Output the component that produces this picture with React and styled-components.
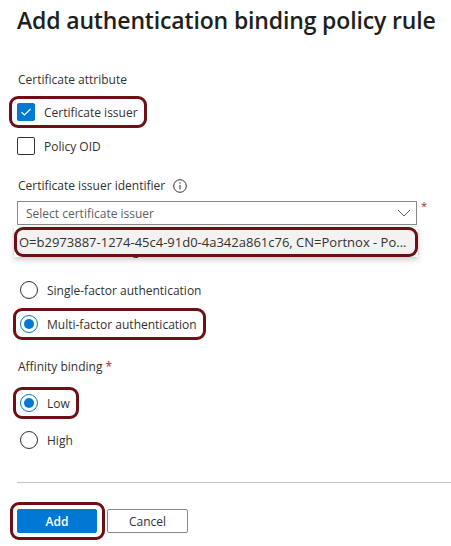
import React from 'react';
import styled, { createGlobalStyle } from 'styled-components';

const GlobalStyle = createGlobalStyle`
  html, body {
    margin: 0;
    padding: 0;
    background: #ffffff;
  }
  body {
    font-family: "Open Sans", "Liberation Sans", sans-serif;
    color: #323130;
    font-size: 12px;
  }
`;

const Page = styled.div`
  width: 451px;
  height: 546px;
  overflow: hidden;
  padding-left: 17px;
  box-sizing: border-box;
`;

const Title = styled.h1`
  margin: 0;
  padding-top: 4px;
  font-size: 23px;
  line-height: 32px;
  font-weight: 600;
  letter-spacing: -0.15px;
  color: #201f1e;
  white-space: nowrap;
`;

const Label = styled.div`
  margin-top: ${(p) => p.$top}px;
  margin-left: 1px;
  font-size: 12px;
  line-height: 18px;
  display: flex;
  align-items: center;
  gap: 8px;
`;

const Required = styled.span`
  color: #a4262c;
  margin-left: 3px;
`;

const Choices = styled.div`
  display: flex;
  flex-direction: column;
  align-items: flex-start;
  gap: ${(p) => p.$gap || 2}px;
  margin-top: ${(p) => p.$top}px;
`;

const Choice = styled.label`
  display: inline-flex;
  align-items: center;
  gap: 9px;
  height: 26px;
  padding: 0 6px 0 ${(p) => (p.$radio ? 4 : 5)}px;
  margin-left: ${(p) => (p.$radio ? -4 : -8)}px;
  border: 3px solid ${(p) => (p.$highlight ? '#6e0f15' : 'transparent')};
  border-radius: 9px;
  font-size: 12px;
`;

const CheckBox = styled.span`
  width: 18px;
  height: 18px;
  box-sizing: border-box;
  border-radius: 2px;
  border: 1px solid ${(p) => (p.$checked ? '#0078d4' : '#323130')};
  background: ${(p) => (p.$checked ? '#0078d4' : '#fff')};
  display: flex;
  align-items: center;
  justify-content: center;
`;

const Radio = styled.span`
  width: 18px;
  height: 18px;
  box-sizing: border-box;
  border-radius: 50%;
  border: 1px solid ${(p) => (p.$checked ? '#0078d4' : '#323130')};
  display: flex;
  align-items: center;
  justify-content: center;
  &::after {
    content: '';
    width: 10px;
    height: 10px;
    border-radius: 50%;
    background: ${(p) => (p.$checked ? '#0078d4' : 'transparent')};
  }
`;

const SelectWrap = styled.div`
  position: relative;
  margin-top: 6px;
  width: 400px;
`;

const SelectBox = styled.div`
  height: 24px;
  box-sizing: border-box;
  border: 1px solid #8a8886;
  display: flex;
  align-items: center;
  justify-content: space-between;
  padding: 0 5px 0 8px;
  color: #605e5c;
  font-size: 12px;
`;

const SelectStar = styled.span`
  position: absolute;
  left: 404px;
  top: -3px;
  font-size: 11px;
  color: #a4262c;
`;

const Menu = styled.div`
  position: absolute;
  top: 26px;
  left: -3px;
  width: 404px;
  background: #fff;
  box-shadow: 0 3px 6px rgba(0, 0, 0, 0.18), 0 0 2px rgba(0, 0, 0, 0.12);
  z-index: 2;
`;

const MenuItem = styled.div`
  height: 30px;
  box-sizing: border-box;
  border: 3px solid #6e0f15;
  border-radius: 9px;
  background: #f3f2f1;
  display: flex;
  align-items: center;
  padding-left: 2px;
  white-space: nowrap;
  overflow: hidden;
  font-size: 13px;
  color: #323130;
`;

const Divider = styled.hr`
  margin: 26px 0 0;
  border: none;
  border-top: 1px solid #c8c6c4;
`;

const Actions = styled.div`
  display: flex;
  align-items: center;
  gap: 2px;
  margin-top: 19px;
`;

const Outline = styled.div`
  border: 3px solid #6e0f15;
  border-radius: 9px;
  padding: 4px 5px 4px 4px;
  margin-left: -7px;
  display: flex;
`;

const Button = styled.button`
  width: ${(p) => p.$width}px;
  height: 24px;
  box-sizing: border-box;
  border-radius: 2px;
  font-family: inherit;
  font-size: 12px;
  padding: 0;
  cursor: pointer;
  font-weight: ${(p) => (p.$primary ? 600 : 400)};
  color: ${(p) => (p.$primary ? '#ffffff' : '#323130')};
  background: ${(p) => (p.$primary ? '#0078d4' : '#ffffff')};
  border: 1px solid ${(p) => (p.$primary ? '#0078d4' : '#8a8886')};
`;

const Check = () => (
  <svg width="12" height="10" viewBox="0 0 12 10">
    <path d="M1.5 5.2 L4.5 8 L10.5 2" fill="none" stroke="#fff" strokeWidth="1.2" />
  </svg>
);

const Chevron = () => (
  <svg width="14" height="8" viewBox="0 0 14 8">
    <path d="M1 1 L7 7 L13 1" fill="none" stroke="#605e5c" strokeWidth="1" />
  </svg>
);

const Info = () => (
  <svg width="14" height="14" viewBox="0 0 14 14">
    <circle cx="7" cy="7" r="6.3" fill="none" stroke="#323130" strokeWidth="1" />
    <line x1="7" y1="6" x2="7" y2="10.5" stroke="#323130" strokeWidth="1" />
    <circle cx="7" cy="4" r="0.7" fill="#323130" />
  </svg>
);

const App = () => (
  <Page>
    <GlobalStyle />
    <Title>Add authentication binding policy rule</Title>

    <Label $top={35}>Certificate attribute</Label>
    <Choices $top={7}>
      <Choice $highlight>
        <CheckBox $checked><Check /></CheckBox>
        Certificate issuer
      </Choice>
      <Choice>
        <CheckBox />
        Policy OID
      </Choice>
    </Choices>

    <Label $top={15}>
      Certificate issuer identifier
      <Info />
    </Label>
    <SelectWrap>
      <SelectBox>
        Select certificate issuer
        <Chevron />
      </SelectBox>
      <SelectStar>*</SelectStar>
      <Menu>
        <MenuItem>O=b2973887-1274-45c4-91d0-4a342a861c76, CN=Portnox - Po...</MenuItem>
      </Menu>
    </SelectWrap>

    <Label $top={17}>Authentication strength</Label>
    <Choices $top={14}>
      <Choice $radio>
        <Radio />
        Single-factor authentication
      </Choice>
      <Choice $radio $highlight>
        <Radio $checked />
        Multi-factor authentication
      </Choice>
    </Choices>

    <Label $top={18}>
      <span>Affinity binding<Required>*</Required></span>
    </Label>
    <Choices $top={11} $gap={5}>
      <Choice $radio $highlight>
        <Radio $checked />
        Low
      </Choice>
      <Choice $radio>
        <Radio />
        High
      </Choice>
    </Choices>

    <Divider />
    <Actions>
      <Outline>
        <Button $primary $width={80}>Add</Button>
      </Outline>
      <Button $width={81}>Cancel</Button>
    </Actions>
  </Page>
);

export default App;
